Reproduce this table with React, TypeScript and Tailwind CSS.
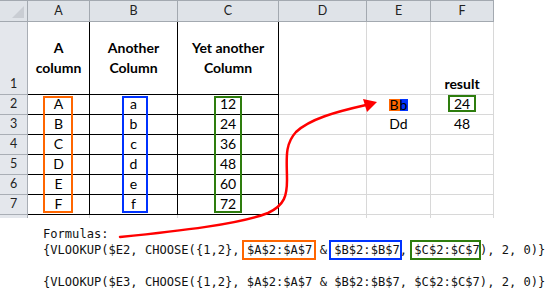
const colHeads = ["A", "B", "C", "D", "E", "F"];

const data = [
  ["A", "a", "12", "", "Bb", "24"],
  ["B", "b", "24", "", "Dd", "48"],
  ["C", "c", "36", "", "", ""],
  ["D", "d", "48", "", "", ""],
  ["E", "e", "60", "", "", ""],
  ["F", "f", "72", "", "", ""],
];

function RowHead({ n, last }: { n?: string; last?: boolean }) {
  return (
    <div
      className={`bg-[#e4e7ec] border-r border-[#a9aeb5] flex items-end justify-center text-[12.5px] text-[#222] leading-[16px] pb-[2px] ${
        last ? "" : "border-b"
      }`}
    >
      {n}
    </div>
  );
}

function Cell({
  col,
  inTable,
  last,
  children,
}: {
  col: number;
  inTable: boolean;
  last?: boolean;
  children?: React.ReactNode;
}) {
  const dark = inTable && col < 3;
  return (
    <div
      className={`border-r flex items-end justify-center leading-[17px] pb-[2px] text-[14px] text-black ${
        last ? "" : "border-b"
      } ${dark ? "border-black" : "border-[#d8d8d8]"}`}
    >
      {children}
    </div>
  );
}

function Boxed({
  children,
  color,
  l,
  r,
}: {
  children: React.ReactNode;
  color: string;
  l: string;
  r: string;
}) {
  return (
    <span className="relative">
      {children}
      <span className={`absolute -top-[3px] -bottom-[3px] border-2 ${color} ${l} ${r}`} />
    </span>
  );
}

export default function App() {
  return (
    <div className="w-[558px] h-[300px] bg-white relative overflow-hidden font-[Lato,sans-serif]">
      {/* Sheet */}
      <div className="relative">
        <div className="grid grid-cols-[28px_62px_88px_101px_88px_64px_63px] grid-rows-[22px_73px_repeat(6,20px)_3px] w-[494px]">
          {/* header row */}
          <div className="bg-[#dfe3e8] border-t border-b border-r border-[#a3a9b0] relative">
            <div className="absolute right-[3px] bottom-[3px] w-0 h-0 border-l-[12px] border-l-transparent border-b-[12px] border-b-[#c9cdd3]" />
          </div>
          {colHeads.map((c) => (
            <div
              key={c}
              className="bg-[#dfe3e8] border-t border-b border-r border-[#a3a9b0] flex items-end justify-center text-[12.5px] text-[#222] leading-[16px] pb-[2px]"
            >
              {c}
            </div>
          ))}

          {/* row 1 */}
          <RowHead n="1" />
          <div className="border-r border-b border-black flex items-center justify-center text-center font-bold text-[14px] leading-[20px]">
            A<br />column
          </div>
          <div className="border-r border-b border-black flex items-center justify-center text-center font-bold text-[14px] leading-[20px]">
            Another
            <br />
            Column
          </div>
          <div className="border-r border-b border-black flex items-center justify-center text-center font-bold text-[14px] leading-[20px]">
            Yet another
            <br />
            Column
          </div>
          <Cell col={3} inTable={false} />
          <Cell col={4} inTable={false} />
          <div className="border-r border-b border-[#d8d8d8] flex items-end justify-center font-bold text-[14px] leading-[17px] pb-[2px]">
            result
          </div>

          {/* rows 2-7 */}
          {data.map((row, i) => (
            <>
              <RowHead key={`h${i}`} n={String(i + 2)} />
              {row.map((v, j) => (
                <Cell key={`${i}-${j}`} col={j} inTable>
                  {i === 0 && j === 4 ? (
                    <span className="flex items-center mb-[1px]">
                      <span className="bg-[#ff6600] leading-[12px] px-[1px]">B</span>
                      <span className="bg-[#0033ff] leading-[12px] pr-[1px]">b</span>
                    </span>
                  ) : i === 0 && j === 5 ? (
                    <span className="border-2 border-[#2e7d0e] h-[17px] px-[4px] leading-[13px] flex items-center">
                      {v}
                    </span>
                  ) : (
                    v
                  )}
                </Cell>
              ))}
            </>
          ))}

          {/* partial row 8 */}
          <RowHead last />
          {colHeads.map((c, j) => (
            <Cell key={`r8${c}`} col={j} inTable={false} last />
          ))}
        </div>

        {/* column outlines */}
        <div className="absolute left-[43px] top-[96px] w-[30px] h-[117px] border-2 border-[#ff6600]" />
        <div className="absolute left-[122px] top-[96px] w-[26px] h-[117px] border-2 border-[#0033ff]" />
        <div className="absolute left-[214px] top-[96px] w-[28px] h-[117px] border-2 border-[#2e7d0e]" />
      </div>

      {/* Formulas */}
      <div className="pl-[43px] pt-[8px] font-['DejaVu_Sans_Mono',monospace] text-[12.1px] leading-[16px] text-[#111] whitespace-pre">
        <div>Formulas:</div>
        <div>
          {"{VLOOKUP($E2, CHOOSE({1,2}, "}
          <Boxed color="border-[#ff6600]" l="-left-[5px]" r="-right-[4px]">
            $A$2:$A$7
          </Boxed>
          {" & "}
          <Boxed color="border-[#0033ff]" l="-left-[5px]" r="-right-[2px]">
            $B$2:$B$7
          </Boxed>
          {", "}
          <Boxed color="border-[#2e7d0e]" l="-left-[4px]" r="-right-[1px]">
            $C$2:$C$7
          </Boxed>
          {"), 2, 0)}"}
        </div>
        <div className="mt-[16px]">{"{VLOOKUP($E3, CHOOSE({1,2}, $A$2:$A$7 & $B$2:$B$7, $C$2:$C$7), 2, 0)}"}</div>
      </div>

      {/* red arrow */}
      <svg className="absolute inset-0 pointer-events-none" width="558" height="300" viewBox="0 0 558 300">
        <path
          d="M120 237 C 180 231, 240 224, 268 213 C 285 205, 287 195, 287 180 C 287 160, 284 145, 296 132 C 310 119, 335 112, 366 105"
          fill="none"
          stroke="#ff0000"
          strokeWidth="2.5"
          strokeLinecap="round"
        />
        <polygon points="377,102 363,99 367,112" fill="#ff0000" />
      </svg>
    </div>
  );
}
